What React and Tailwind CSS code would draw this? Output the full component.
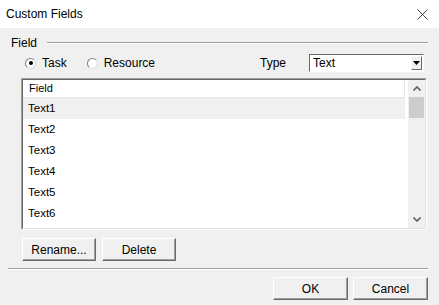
import React from "react";

const rows = ["Text1", "Text2", "Text3", "Text4", "Text5", "Text6"];

const Radio = ({ checked, label }) => (
  <label className="flex items-center gap-[6px]">
    <span className="flex h-[11px] w-[11px] items-center justify-center rounded-full border border-t-[#808080] border-l-[#808080] border-r-[#dcdcdc] border-b-[#dcdcdc] bg-white">
      {checked && <span className="h-[4px] w-[4px] rounded-full bg-black" />}
    </span>
    <span>{label}</span>
  </label>
);

const Button = ({ children, className = "" }) => (
  <button
    className={
      "flex h-[23px] items-center justify-center border border-t-white border-l-white border-r-[#696969] border-b-[#696969] bg-[#f0f0f0] shadow-[inset_-1px_-1px_0_#a0a0a0] text-[12px] text-black " +
      className
    }
  >
    {children}
  </button>
);

export default function App() {
  return (
    <div className="flex h-[305px] w-[439px] flex-col font-['Liberation_Sans',Arial,sans-serif] text-[12px] text-black">
      {/* Title bar */}
      <div className="flex h-[28px] items-center justify-between bg-white pl-[6px] pr-[9px]">
        <span className="text-[12px]">Custom Fields</span>
        <svg width="11" height="11" viewBox="0 0 11 11" className="mr-[2px]">
          <path d="M0.5 0.5L10.5 10.5M10.5 0.5L0.5 10.5" stroke="#333" strokeWidth="0.9" />
        </svg>
      </div>

      <div className="flex flex-1 flex-col bg-[#f0f0f0]">
        {/* Group header */}
        <div className="mt-[8px] flex h-[14px] items-center pl-[11px] pr-[11px]">
          <span>Field</span>
          <div className="ml-[10px] flex-1 border-t border-b border-t-[#a0a0a0] border-b-white" />
        </div>

        {/* Radios and type */}
        <div className="mt-[4px] flex h-[18px] items-center pl-[25px] pr-[15px]">
          <Radio checked label="Task" />
          <div className="ml-[20px]">
            <Radio label="Resource" />
          </div>
          <span className="ml-auto mr-[23px]">Type</span>
          <div className="flex h-[18px] w-[115px] items-center border border-t-[#696969] border-l-[#696969] border-r-white border-b-white bg-white">
            <span className="ml-[3px] flex-1">Text</span>
            <div className="mr-[1px] flex h-[14px] w-[11px] items-center justify-center border border-t-white border-l-white border-r-[#696969] border-b-[#696969] bg-[#f0f0f0]">
              <svg width="7" height="4" viewBox="0 0 7 4">
                <path d="M0 0H7L3.5 4Z" fill="#000" />
              </svg>
            </div>
          </div>
        </div>

        {/* List box */}
        <div className="ml-[21px] mt-[6px] flex h-[152px] w-[406px] border border-t-[#a0a0a0] border-l-[#a0a0a0] border-r-white border-b-white">
          <div className="flex flex-1 border border-t-[#696969] border-l-[#696969] border-r-[#e3e3e3] border-b-[#e3e3e3] bg-white">
            <div className="flex w-[382px] flex-col">
              <div className="flex h-[18px] items-center border-b border-r border-[#e5e5e5] pl-[6px] text-[11px]">
                Field
              </div>
              {rows.map((r, i) => (
                <div
                  key={r}
                  className={
                    "flex h-[21px] items-center pl-[5px] text-[11.5px] " +
                    (i === 0 ? "bg-[#f0f0f0]" : "")
                  }
                >
                  {r}
                </div>
              ))}
            </div>
            <div className="ml-auto flex w-[17px] flex-col bg-[#f0f0f0]">
              <div className="flex h-[17px] items-center justify-center">
                <svg width="8" height="5" viewBox="0 0 8 5">
                  <path d="M0.5 4.5L4 1L7.5 4.5" stroke="#606060" strokeWidth="1.6" fill="none" />
                </svg>
              </div>
              <div className="mx-[1px] h-[21px] bg-[#cdcdcd]" />
              <div className="mt-auto flex h-[17px] items-center justify-center">
                <svg width="8" height="5" viewBox="0 0 8 5">
                  <path d="M0.5 0.5L4 4L7.5 0.5" stroke="#606060" strokeWidth="1.6" fill="none" />
                </svg>
              </div>
            </div>
          </div>
        </div>

        {/* Rename / Delete */}
        <div className="ml-[22px] mt-[8px] flex gap-[6px]">
          <Button className="w-[74px]">Rename...</Button>
          <Button className="w-[74px]">Delete</Button>
        </div>

        {/* Separator */}
        <div className="ml-[8px] mr-[11px] mt-[7px] border-t border-b border-t-[#a0a0a0] border-b-white" />

        {/* OK / Cancel */}
        <div className="mr-[11px] mt-[7px] flex justify-end gap-[5px]">
          <Button className="w-[75px]">OK</Button>
          <Button className="w-[75px]">Cancel</Button>
        </div>
      </div>
    </div>
  );
}
